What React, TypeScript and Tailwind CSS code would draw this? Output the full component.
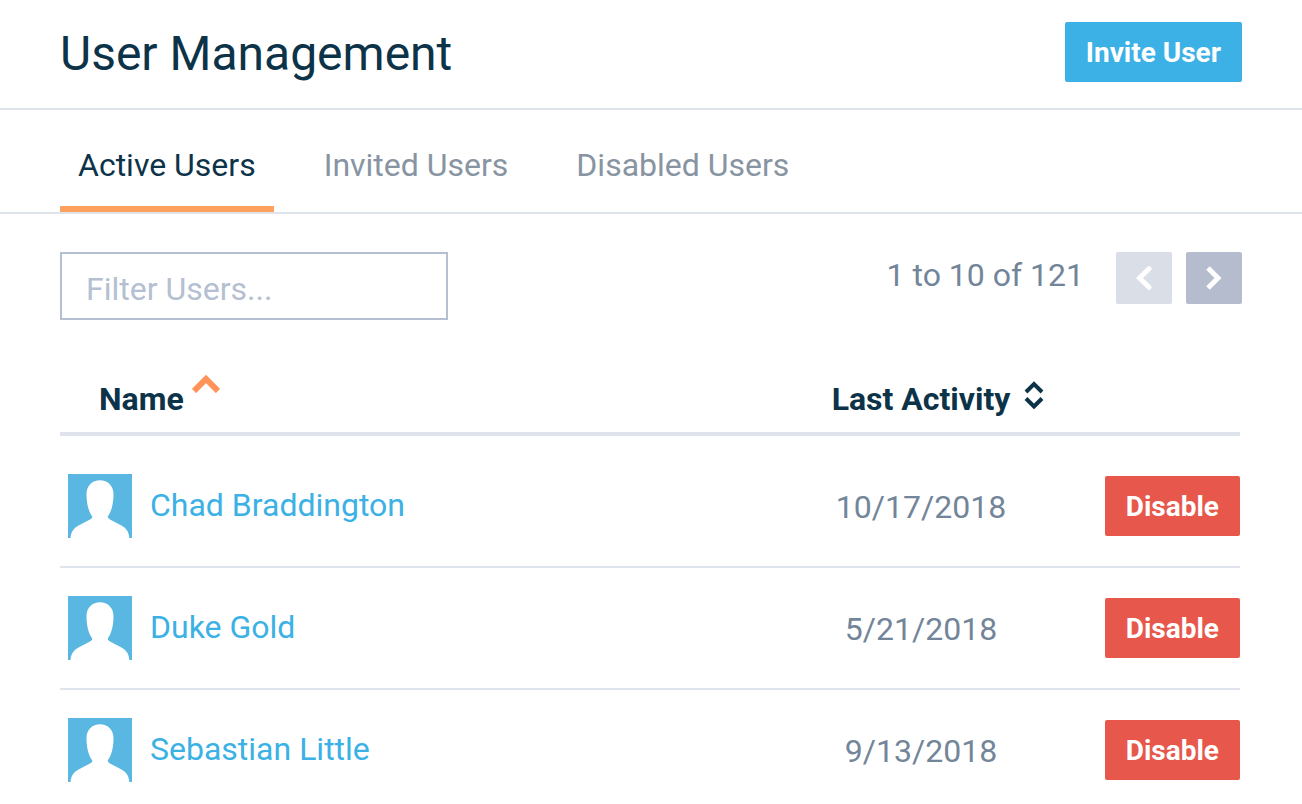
import { useState } from "react";

const tabs = ["Active Users", "Invited Users", "Disabled Users"];

const users = [
  { name: "Chad Braddington", lastActivity: "10/17/2018" },
  { name: "Duke Gold", lastActivity: "5/21/2018" },
  { name: "Sebastian Little", lastActivity: "9/13/2018" },
];

const Avatar = () => (
  <svg viewBox="0 0 64 64" className="size-16 shrink-0" aria-hidden="true">
    <rect width="64" height="64" fill="#5ab7e1" />
    <path
      d="M2.5 64C3 57 6.500 53.500 11 51.200L22 45.500Q24.800 43.800 24.300 42.500C20 37 18.500 28 18.500 20C18.500 11.500 24.500 6.300 32 6.300C39.500 6.300 45.500 11.500 45.500 20C45.500 28 44 37 39.700 42.500Q39.500 43.800 42 45.500L53 51.200C57.500 53.500 61 57 61.300 64Z"
      fill="#fff"
    />
  </svg>
);

const SortUp = () => (
  <svg viewBox="0 0 28 18" className="-mt-1 h-[18px] w-7" fill="none" aria-hidden="true">
    <path d="M2 16L14 4L26 16" stroke="#ff935a" strokeWidth="6" />
  </svg>
);

const SortBoth = () => (
  <svg viewBox="0 0 20 28" className="mt-0.5 h-7 w-5" fill="none" stroke="#0d3349" strokeWidth="4" aria-hidden="true">
    <path d="M2 11L10 3L18 11M2 17.500L10 25.500L18 17.500" />
  </svg>
);

const App = () => {
  const [activeTab, setActiveTab] = useState(tabs[0]);
  const [filter, setFilter] = useState("");

  const visibleUsers = users.filter((user) => user.name.toLowerCase().includes(filter.toLowerCase()));

  return (
    <div className="min-h-screen bg-white font-['Roboto',sans-serif] text-[32px] leading-10 text-[#738599]">
      <header className="flex items-start justify-between border-b-2 border-[#dfe3eb] px-[60px] pt-[22px] pb-[22px]">
        <h1 className="text-5xl leading-[64px] text-[#0d3349]">User Management</h1>
        <button type="button" className="h-[60px] rounded-xs bg-[#3bb1e5] px-[21px] pt-0.5 text-[28px] font-bold text-white">
          Invite User
        </button>
      </header>

      <nav className="flex gap-8 border-b-2 border-[#dfe3eb] px-[60px]">
        {tabs.map((tab) => (
          <button
            key={tab}
            type="button"
            onClick={() => setActiveTab(tab)}
            className={
              tab === activeTab
                ? "border-b-6 border-[#ffa05c] px-[18px] pt-[35px] pb-[21px] text-[#0d3349]"
                : "border-b-6 border-transparent px-[18px] pt-[35px] pb-[21px] text-[#8894a2]"
            }
          >
            {tab}
          </button>
        ))}
      </nav>

      <main className="px-[60px] pt-[38px]">
        <div className="flex items-start justify-between">
          <input
            type="text"
            aria-label="Filter Users"
            placeholder="Filter Users..."
            value={filter}
            onChange={(e) => setFilter(e.target.value)}
            className="h-[68px] w-[388px] border-2 border-[#b4c0d2] px-6 pt-1.5 placeholder:text-[#b4c0d2]"
          />
          <div className="flex items-start">
            <p className="pt-[3px] pr-8">1 to 10 of 121</p>
            <button
              type="button"
              aria-label="Previous page"
              className="flex h-[52px] w-14 items-center justify-center rounded-xs bg-[#dadee6]"
            >
              <svg viewBox="0 0 16 24" className="h-6 w-4" fill="none" stroke="#fff" strokeWidth="5" aria-hidden="true">
                <path d="M13 2.700L3.500 12L13 21.300" strokeLinecap="round" />
              </svg>
            </button>
            <button
              type="button"
              aria-label="Next page"
              className="ml-3.5 flex h-[52px] w-14 items-center justify-center rounded-xs bg-[#b5bccd]"
            >
              <svg viewBox="0 0 16 24" className="h-6 w-4" fill="none" stroke="#fff" strokeWidth="5" aria-hidden="true">
                <path d="M2 2L12 12L2 22" />
              </svg>
            </button>
          </div>
        </div>

        <div className="pt-[52px] pr-0.5">
          <table className="w-full table-fixed border-separate border-spacing-0">
            <thead>
              <tr className="text-[#0d3349]">
                <th className="border-b-4 border-[#dfe3eb] pt-[7px] pb-[13px] pl-[39px] text-left font-bold">
                  <div className="flex gap-2">
                    Name
                    <SortUp />
                  </div>
                </th>
                <th className="w-[244px] border-b-4 border-[#dfe3eb] pt-[7px] pb-[13px] font-bold">
                  <div className="flex justify-center gap-3.5">
                    Last Activity
                    <SortBoth />
                  </div>
                </th>
                <th className="w-[180px] border-b-4 border-[#dfe3eb]" aria-label="Actions" />
              </tr>
            </thead>
            <tbody className="before:block before:h-2.5">
              {visibleUsers.map((user) => (
                <tr key={user.name}>
                  <td className="border-b-2 border-[#dfe3eb] py-7 pl-2">
                    <a href="#" className="flex items-center gap-[18px] text-[#3bb1e5]">
                      <Avatar />
                      <span className="pb-0.5">{user.name}</span>
                    </a>
                  </td>
                  <td className="border-b-2 border-[#dfe3eb] pt-0.5 pr-[34px] text-center">{user.lastActivity}</td>
                  <td className="border-b-2 border-[#dfe3eb]">
                    <div className="flex justify-end">
                      <button
                        type="button"
                        className="h-[60px] rounded-xs bg-[#e7574c] px-[21px] pt-0.5 text-[28px] font-bold text-white"
                      >
                        Disable
                      </button>
                    </div>
                  </td>
                </tr>
              ))}
            </tbody>
          </table>
        </div>
      </main>
    </div>
  );
};

export default App;
